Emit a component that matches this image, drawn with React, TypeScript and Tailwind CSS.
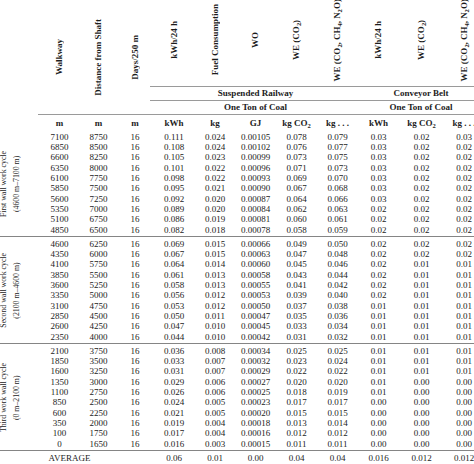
import React from "react";

const COLS =
  "grid grid-cols-[43px_35px_38px_40px_42px_39px_43px_39px_43px_43px_42px]";

const g1: string[][] = [
  ["7100", "8750", "16", "0.111", "0.024", "0.00105", "0.078", "0.079", "0.03", "0.02", "0.03"],
  ["6850", "8500", "16", "0.108", "0.024", "0.00102", "0.076", "0.077", "0.03", "0.02", "0.02"],
  ["6600", "8250", "16", "0.105", "0.023", "0.00099", "0.073", "0.075", "0.03", "0.02", "0.02"],
  ["6350", "8000", "16", "0.101", "0.022", "0.00096", "0.071", "0.073", "0.03", "0.02", "0.02"],
  ["6100", "7750", "16", "0.098", "0.022", "0.00093", "0.069", "0.070", "0.03", "0.02", "0.02"],
  ["5850", "7500", "16", "0.095", "0.021", "0.00090", "0.067", "0.068", "0.03", "0.02", "0.02"],
  ["5600", "7250", "16", "0.092", "0.020", "0.00087", "0.064", "0.066", "0.03", "0.02", "0.02"],
  ["5350", "7000", "16", "0.089", "0.020", "0.00084", "0.062", "0.063", "0.02", "0.02", "0.02"],
  ["5100", "6750", "16", "0.086", "0.019", "0.00081", "0.060", "0.061", "0.02", "0.02", "0.02"],
  ["4850", "6500", "16", "0.082", "0.018", "0.00078", "0.058", "0.059", "0.02", "0.02", "0.02"],
];

const g2: string[][] = [
  ["4600", "6250", "16", "0.069", "0.015", "0.00066", "0.049", "0.050", "0.02", "0.02", "0.02"],
  ["4350", "6000", "16", "0.067", "0.015", "0.00063", "0.047", "0.048", "0.02", "0.02", "0.02"],
  ["4100", "5750", "16", "0.064", "0.014", "0.00060", "0.045", "0.046", "0.02", "0.01", "0.01"],
  ["3850", "5500", "16", "0.061", "0.013", "0.00058", "0.043", "0.044", "0.02", "0.01", "0.01"],
  ["3600", "5250", "16", "0.058", "0.013", "0.00055", "0.041", "0.042", "0.02", "0.01", "0.01"],
  ["3350", "5000", "16", "0.056", "0.012", "0.00053", "0.039", "0.040", "0.02", "0.01", "0.01"],
  ["3100", "4750", "16", "0.053", "0.012", "0.00050", "0.037", "0.038", "0.01", "0.01", "0.01"],
  ["2850", "4500", "16", "0.050", "0.011", "0.00047", "0.035", "0.036", "0.01", "0.01", "0.01"],
  ["2600", "4250", "16", "0.047", "0.010", "0.00045", "0.033", "0.034", "0.01", "0.01", "0.01"],
  ["2350", "4000", "16", "0.044", "0.010", "0.00042", "0.031", "0.032", "0.01", "0.01", "0.01"],
];

const g3: string[][] = [
  ["2100", "3750", "16", "0.036", "0.008", "0.00034", "0.025", "0.025", "0.01", "0.01", "0.01"],
  ["1850", "3500", "16", "0.033", "0.007", "0.00032", "0.023", "0.024", "0.01", "0.01", "0.01"],
  ["1600", "3250", "16", "0.031", "0.007", "0.00029", "0.022", "0.022", "0.01", "0.01", "0.01"],
  ["1350", "3000", "16", "0.029", "0.006", "0.00027", "0.020", "0.020", "0.01", "0.00", "0.00"],
  ["1100", "2750", "16", "0.026", "0.006", "0.00025", "0.018", "0.019", "0.01", "0.00", "0.00"],
  ["850", "2500", "16", "0.024", "0.005", "0.00023", "0.017", "0.017", "0.00", "0.00", "0.00"],
  ["600", "2250", "16", "0.021", "0.005", "0.00020", "0.015", "0.015", "0.00", "0.00", "0.00"],
  ["350", "2000", "16", "0.019", "0.004", "0.00018", "0.013", "0.014", "0.00", "0.00", "0.00"],
  ["100", "1750", "16", "0.017", "0.004", "0.00016", "0.012", "0.012", "0.00", "0.00", "0.00"],
  ["0", "1650", "16", "0.016", "0.003", "0.00015", "0.011", "0.011", "0.00", "0.00", "0.00"],
];

function VSub({ children }: { children: React.ReactNode }) {
  return <sub className="bottom-0 align-sub text-[6.5px]">{children}</sub>;
}

function HSub({ children }: { children: React.ReactNode }) {
  return <sub className="text-[6.5px]">{children}</sub>;
}

function V({ children }: { children: React.ReactNode }) {
  return (
    <div className="[writing-mode:vertical-rl] rotate-180 whitespace-nowrap font-bold leading-[11px]">
      {children}
    </div>
  );
}

function DataRow({ r }: { r: string[] }) {
  return (
    <div className={`${COLS} h-[10.33px] items-center`}>
      {r.map((c, i) => (
        <div key={i} className="text-center leading-none">
          {c}
        </div>
      ))}
    </div>
  );
}

function Group({
  l1,
  l2,
  rows,
}: {
  l1: string;
  l2: string;
  rows: string[][];
}) {
  return (
    <div className="flex">
      <div className="w-[53px] shrink-0 flex items-center justify-center pr-[4px]">
        <div className="[writing-mode:vertical-rl] rotate-180 text-center leading-[13px] text-[7.8px] whitespace-nowrap">
          <div>{l1}</div>
          <div>{l2}</div>
        </div>
      </div>
      <div className="w-[447px]">
        {rows.map((r, i) => (
          <DataRow key={i} r={r} />
        ))}
      </div>
    </div>
  );
}

function Sep() {
  return (
    <div className="pt-[1.2px] pb-[1.5px]">
      <div className="h-px bg-[#858585]" />
    </div>
  );
}

export default function App() {
  return (
    <div
      className="w-[474px] h-[464px] overflow-hidden bg-white text-[#1c1c1c] text-[9px]"
      style={{ fontFamily: '"Liberation Serif", "Times New Roman", serif' }}
    >
      <div className="w-[500px] ml-[-15px]">
        {/* Header */}
        <div className="flex">
          <div className="w-[53px] shrink-0" />
          <div className={`${COLS} grid-rows-[86px_14px_14px] w-[447px]`}>
            <div className="col-start-1 row-start-1 row-span-3 flex items-center justify-center">
              <V>Walkway</V>
            </div>
            <div className="col-start-2 row-start-1 row-span-3 flex items-center justify-center">
              <V>Distance from Shaft</V>
            </div>
            <div className="col-start-3 row-start-1 row-span-3 flex items-center justify-center">
              <V>Days/250 m</V>
            </div>
            <div className="col-start-4 row-start-1 flex items-center justify-center pb-[6px]">
              <V>kWh/24 h</V>
            </div>
            <div className="col-start-5 row-start-1 flex items-center justify-center pb-[6px]">
              <V>Fuel Consumption</V>
            </div>
            <div className="col-start-6 row-start-1 flex items-center justify-center pb-[6px]">
              <V>WO</V>
            </div>
            <div className="col-start-7 row-start-1 flex items-center justify-center pb-[6px]">
              <V>
                WE (CO<VSub>2</VSub>)
              </V>
            </div>
            <div className="col-start-8 row-start-1 flex items-center justify-center pb-[6px]">
              <V>
                WE (CO<VSub>2</VSub>, CH<VSub>4</VSub>, N<VSub>2</VSub>O)
              </V>
            </div>
            <div className="col-start-9 row-start-1 flex items-center justify-center pb-[6px]">
              <V>kWh/24 h</V>
            </div>
            <div className="col-start-10 row-start-1 flex items-center justify-center pb-[6px]">
              <V>
                WE (CO<VSub>2</VSub>)
              </V>
            </div>
            <div className="col-start-11 row-start-1 flex items-center justify-center pb-[6px]">
              <V>
                WE (CO<VSub>2</VSub>, CH<VSub>4</VSub>, N<VSub>2</VSub>O)
              </V>
            </div>

            {/* rules */}
            <div className="col-start-4 col-span-8 row-start-2 self-start h-px bg-[#9a9a9a] ml-[-4px]" />
            <div className="col-start-4 col-span-8 row-start-3 self-start h-px bg-[#9a9a9a] ml-[-4px]" />

            <div className="col-start-4 col-span-5 row-start-2 flex items-center justify-center pt-px font-bold leading-none">
              Suspended Railway
            </div>
            <div className="col-start-9 col-span-3 row-start-2 flex items-center justify-center pt-px font-bold leading-none">
              Conveyor Belt
            </div>
            <div className="col-start-4 col-span-5 row-start-3 flex items-center justify-center pt-px font-bold leading-none">
              One Ton of Coal
            </div>
            <div className="col-start-9 col-span-3 row-start-3 flex items-center justify-center pt-px font-bold leading-none">
              One Ton of Coal
            </div>
          </div>
        </div>

        {/* Units row */}
        <div className="flex">
          <div className="w-[53px] shrink-0" />
          <div
            className={`${COLS} w-[447px] h-[18px] items-center border-t border-[#9a9a9a] font-bold leading-none`}
          >
            <div className="text-center">m</div>
            <div className="text-center">m</div>
            <div className="text-center">m</div>
            <div className="text-center">kWh</div>
            <div className="text-center">kg</div>
            <div className="text-center">GJ</div>
            <div className="text-center">
              kg CO<HSub>2</HSub>
            </div>
            <div className="text-center">kg . . .</div>
            <div className="text-center">kWh</div>
            <div className="text-center">
              kg CO<HSub>2</HSub>
            </div>
            <div className="text-center">kg . . .</div>
          </div>
        </div>

        <Group l1="First wall work cycle" l2="(4600 m–7100 m)" rows={g1} />
        <Sep />
        <Group l1="Second wall work cycle" l2="(2100 m–4600 m)" rows={g2} />
        <Sep />
        <Group l1="Third work wall cycle" l2="(0 m–2100 m)" rows={g3} />
        <Sep />

        {/* Average row */}
        <div className="grid grid-cols-[53px_43px_35px_38px_40px_42px_39px_43px_39px_43px_43px_42px] h-[10.33px] items-center leading-none">
          <div className="col-span-4 text-center">AVERAGE</div>
          <div className="text-center">0.06</div>
          <div className="text-center">0.01</div>
          <div className="text-center">0.00</div>
          <div className="text-center">0.04</div>
          <div className="text-center">0.04</div>
          <div className="text-center">0.016</div>
          <div className="text-center">0.012</div>
          <div className="text-center">0.012</div>
        </div>
      </div>
    </div>
  );
}
